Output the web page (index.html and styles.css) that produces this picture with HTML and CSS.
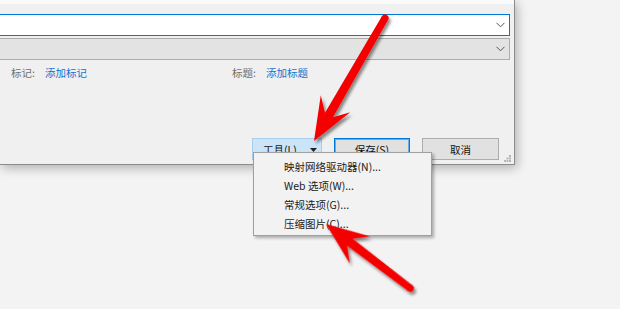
FILE: index.html
```html
<!DOCTYPE html>
<html lang="zh-CN">
<head>
<meta charset="utf-8">
<title>另存为</title>
<link rel="stylesheet" href="styles.css">
</head>
<body>
<div class="dialog">
  <div class="topstrip"></div>
  <div class="fields">
    <div class="combo combo-active">
      <svg class="chev" width="9" height="6" viewBox="0 0 9 6"><path d="M0.5 0.8 L4.5 4.8 L8.5 0.8" fill="none" stroke="#555" stroke-width="1"/></svg>
    </div>
    <div class="combo combo-gray">
      <svg class="chev" width="9" height="6" viewBox="0 0 9 6"><path d="M0.5 0.8 L4.5 4.8 L8.5 0.8" fill="none" stroke="#555" stroke-width="1"/></svg>
    </div>
  </div>
  <div class="meta">
    <div class="meta-item meta-tags"><span class="lbl">标记:</span><span class="lnk">添加标记</span></div>
    <div class="meta-item"><span class="lbl">标题:</span><span class="lnk">添加标题</span></div>
  </div>
  <div class="buttons">
    <div class="btn btn-tools"><span>工具(L)</span><svg class="tri" width="7" height="4" viewBox="0 0 7 4"><path d="M0 0 H7 L3.5 4 Z" fill="#222"/></svg></div>
    <div class="btn btn-default">保存(S)</div>
    <div class="btn">取消</div>
  </div>
  <svg class="grip" width="7" height="7" viewBox="0 0 7 7">
    <rect x="5" y="0" width="2" height="2" fill="#b5b5b5"/>
    <rect x="2.5" y="2.5" width="2" height="2" fill="#b5b5b5"/>
    <rect x="5" y="2.5" width="2" height="2" fill="#b5b5b5"/>
    <rect x="0" y="5" width="2" height="2" fill="#b5b5b5"/>
    <rect x="2.5" y="5" width="2" height="2" fill="#b5b5b5"/>
    <rect x="5" y="5" width="2" height="2" fill="#b5b5b5"/>
  </svg>
</div>

<div class="menu">
  <div class="menu-item">映射网络驱动器(N)...</div>
  <div class="menu-item">Web 选项(W)...</div>
  <div class="menu-item">常规选项(G)...</div>
  <div class="menu-item">压缩图片(C)...</div>
</div>

<svg class="arrows" width="620" height="309" viewBox="0 0 620 309">
  <defs>
    <filter id="sh" x="-30%" y="-30%" width="160%" height="160%">
      <feGaussianBlur in="SourceAlpha" stdDeviation="1.6"/>
      <feOffset dx="2" dy="3" result="b"/>
      <feComponentTransfer><feFuncA type="linear" slope="0.45"/></feComponentTransfer>
      <feMerge><feMergeNode/><feMergeNode in="SourceGraphic"/></feMerge>
    </filter>
  </defs>
  <g filter="url(#sh)" fill="#f40000">
    <g transform="translate(314,141) rotate(120)">
      <polygon points="-142,-3.6 -30,-4.6 -43,-17 0,0 -43,17 -30,4.6 -142,3.6"/>
      <circle cx="-142" cy="0" r="3.6"/>
    </g>
    <g transform="translate(326,224) rotate(-142.7)">
      <polygon points="-106,-3.6 -30,-4.6 -43,-17 0,0 -43,17 -30,4.6 -106,3.6"/>
      <circle cx="-106" cy="0" r="3.6"/>
    </g>
  </g>
</svg>
</body>
</html>
```

FILE: styles.css
```css
html, body {
  margin: 0;
  padding: 0;
}
body {
  width: 620px;
  height: 309px;
  overflow: hidden;
  background: #f3f3f3;
  font-family: "Noto Sans CJK SC", "Noto Sans", sans-serif;
  font-size: 10.5px;
  position: relative;
}
.dialog {
  position: relative;
  width: 514px;
  height: 164px;
  background: #f0f0f0;
  border-right: 1px solid #8c8c8c;
  border-bottom: 1px solid #8c8c8c;
  box-shadow: 2px 3px 10px rgba(0, 0, 0, 0.28);
  display: flex;
  flex-direction: column;
}
.topstrip {
  height: 4px;
  background: #fafafa;
}
.fields {
  display: flex;
  flex-direction: column;
  gap: 2px;
  padding: 10px 4px 0 0;
  margin-left: -2px;
}
.combo {
  height: 20px;
  display: flex;
  justify-content: flex-end;
  align-items: center;
  padding-right: 4px;
}
.combo-active {
  background: #ffffff;
  border: 1px solid #0078d7;
}
.combo-gray {
  background: #e3e3e3;
  border: 1px solid #adadad;
}
.chev {
  display: block;
}
.meta {
  display: flex;
  margin-top: 6px;
  padding-left: 11px;
  height: 14px;
  line-height: 14px;
}
.meta-item {
  display: flex;
  gap: 10px;
}
.meta-tags {
  width: 221px;
}
.lbl {
  color: #6e6e6e;
}
.lnk {
  color: #1470cc;
}
.buttons {
  display: flex;
  justify-content: flex-end;
  gap: 12px;
  margin-top: 58px;
  padding-right: 15px;
}
.btn {
  box-sizing: border-box;
  width: 77px;
  height: 22px;
  border: 1px solid #adadad;
  background: #e1e1e1;
  color: #111;
  display: flex;
  align-items: center;
  justify-content: center;
}
.btn-default {
  border: 1px solid #0078d7;
  box-shadow: inset 0 0 0 1px #6aaee8;
  width: 76px;
}
.btn-tools {
  width: 70px;
  background: #cce4f7;
  border-color: #a9cdec;
  justify-content: space-between;
  padding: 0 4px 0 10px;
}
.tri {
  display: block;
  margin-top: 2px;
}
.grip {
  position: absolute;
  right: 3px;
  bottom: 2px;
}
.menu {
  position: absolute;
  left: 253px;
  top: 152px;
  width: 179px;
  height: 84px;
  box-sizing: border-box;
  background: #f2f2f2;
  border: 1px solid #a0a0a0;
  box-shadow: 2px 2px 3px rgba(0, 0, 0, 0.3);
  padding: 4px 0 0 30px;
  color: #1a1a1a;
}
.menu-item {
  height: 19px;
  line-height: 19px;
}
.arrows {
  position: absolute;
  left: 0;
  top: 0;
  pointer-events: none;
}
```
